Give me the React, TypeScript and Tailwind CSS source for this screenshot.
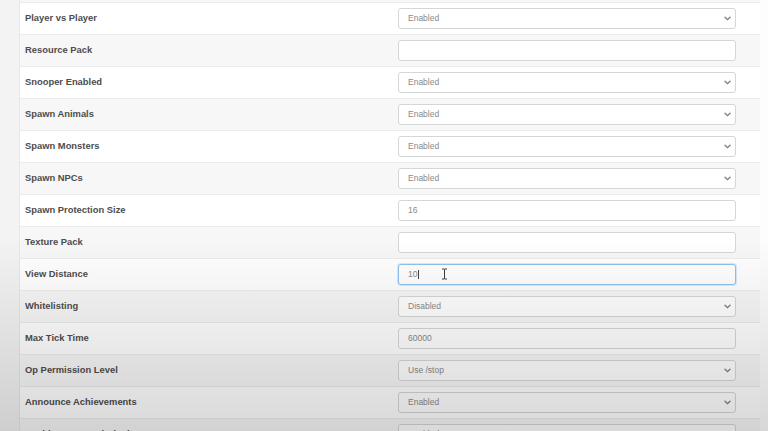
type Field = {
  label: string;
  kind: 'select' | 'text';
  value: string;
  focused?: boolean;
};

// first row is only a sliver at the top edge, so it carries no text
const fields: Field[] = [
  { label: '', kind: 'text', value: '' },
  { label: 'Player vs Player', kind: 'select', value: 'Enabled' },
  { label: 'Resource Pack', kind: 'text', value: '' },
  { label: 'Snooper Enabled', kind: 'select', value: 'Enabled' },
  { label: 'Spawn Animals', kind: 'select', value: 'Enabled' },
  { label: 'Spawn Monsters', kind: 'select', value: 'Enabled' },
  { label: 'Spawn NPCs', kind: 'select', value: 'Enabled' },
  { label: 'Spawn Protection Size', kind: 'text', value: '16' },
  { label: 'Texture Pack', kind: 'text', value: '' },
  { label: 'View Distance', kind: 'text', value: '10', focused: true },
  { label: 'Whitelisting', kind: 'select', value: 'Disabled' },
  { label: 'Max Tick Time', kind: 'text', value: '60000' },
  { label: 'Op Permission Level', kind: 'select', value: 'Use /stop' },
  { label: 'Announce Achievements', kind: 'select', value: 'Enabled' },
  { label: 'Enable Command Block', kind: 'select', value: 'Enabled' },
];

const Chevron = () => (
  <svg width="7" height="5" viewBox="0 0 7 5" className="shrink-0">
    <path d="M1 1.2 L3.5 3.7 L6 1.2" fill="none" stroke="#7d7d7d" strokeWidth="1.3" strokeLinecap="round" />
  </svg>
);

const IBeam = () => (
  <svg width="7" height="12" viewBox="0 0 7 12" className="absolute left-[441px] top-[-2px]">
    <path d="M1 1 H3 Q3.5 1 3.5 1.6 V10.4 Q3.5 11 3 11 H1 M6 1 H4 Q3.5 1 3.5 1.6 M3.5 10.4 Q3.5 11 4 11 H6" fill="none" stroke="#3a3a3a" strokeWidth="1" />
  </svg>
);

const Control = ({ field }: { field: Field }) => {
  const border = field.focused ? 'border-[#8ec2f0] shadow-[0_0_0_1px_rgba(142,194,240,0.35)]' : 'border-[#d6d6d6]';
  return (
    <div className={`flex h-[21px] w-[338px] items-center justify-between rounded-[3px] border bg-white pl-[9px] pr-[4px] text-[8.5px] text-[#8a8a8a] ${border}`}>
      <span className="flex items-center">
        {field.value}
        {field.focused && <span className="ml-[1px] h-[9px] w-px bg-[#444]" />}
      </span>
      {field.kind === 'select' && <Chevron />}
    </div>
  );
};

export default function App() {
  return (
    <div className="relative flex h-[431px] w-[768px] overflow-hidden bg-white font-['Liberation_Sans',Arial,sans-serif]">
      <div className="w-[20px] shrink-0 border-r border-[#e8e8e8] bg-[#f3f3f3]" />
      <div className="-mt-[30px] flex w-[740px] shrink-0 flex-col">
        {fields.map((f, i) => (
          <div
            key={i}
            className={`relative flex h-[32px] shrink-0 items-center border-t border-[#ebebeb] ${i % 2 === 0 ? 'bg-[#f7f7f7]' : 'bg-white'}`}
          >
            <div className="w-[378px] shrink-0 pl-[5px] text-[9.4px] font-bold text-[#4d4d4d]">{f.label}</div>
            <Control field={f} />
            {f.focused && (
              <div className="absolute left-[-20px] top-[11px]">
                <IBeam />
              </div>
            )}
          </div>
        ))}
      </div>
      <div className="flex-1 bg-[#fdfdfd]" />
      <div className="pointer-events-none absolute inset-0 bg-linear-to-b from-transparent from-55% to-black/15" />
    </div>
  );
}
